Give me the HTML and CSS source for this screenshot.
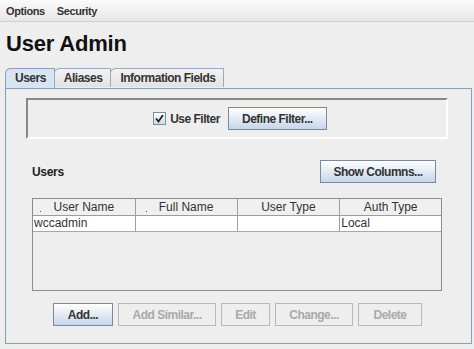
FILE: index.html
```html
<!DOCTYPE html>
<html lang="en">
<head>
    <meta charset="UTF-8">
    <title>User Admin</title>
    <link rel="stylesheet" href="styles.css">
</head>
<body>

<div class="menubar">
    <span class="menu-item">Options</span>
    <span class="menu-item">Security</span>
</div>

<h1 class="title">User Admin</h1>

<div class="tabs">
    <div class="tab active">Users</div>
    <div class="tab">Aliases</div>
    <div class="tab">Information Fields</div>
</div>

<div class="panel">
    <!-- filter -->
    <div class="filter-box">
        <label class="check">
            <span class="check-box">
                <svg width="9" height="9" viewBox="0 0 9 9"><path d="M1 4.5 L3.5 7.5 L8 1" fill="none" stroke="#222" stroke-width="1.8"/></svg>
            </span>
            Use Filter
        </label>
        <button class="btn btn-define">Define Filter...</button>
    </div>

    <div class="users-head">
        <span class="users-label">Users</span>
        <button class="btn btn-columns">Show Columns...</button>
    </div>

    <div class="table">
        <div class="row head">
            <div class="cell c1"><i class="sort-dot"></i>User Name</div>
            <div class="cell c2"><i class="sort-dot"></i>Full Name</div>
            <div class="cell c3">User Type</div>
            <div class="cell c4">Auth Type</div>
        </div>
        <div class="row data">
            <div class="cell c1">wccadmin</div>
            <div class="cell c2"></div>
            <div class="cell c3"></div>
            <div class="cell c4">Local</div>
        </div>
    </div>

    <div class="actions">
        <button class="btn btn-add">Add...</button>
        <button class="btn off btn-similar">Add Similar...</button>
        <button class="btn off btn-edit">Edit</button>
        <button class="btn off btn-change">Change...</button>
        <button class="btn off btn-delete">Delete</button>
    </div>
</div>

</body>
</html>
```

FILE: styles.css
```css
body {
    margin: 0;
    padding: 0;
    background: #eeeeee;
    font-family: 'Liberation Sans', Arial, sans-serif;
    font-size: 12px;
    color: #333;
}

.menubar {
    height: 21px;
    display: flex;
    align-items: center;
    gap: 12px;
    padding-left: 6px;
    background: linear-gradient(#fbfbfb, #e6e6e6);
    border-bottom: 1px solid #d0d0d0;
}

.menu-item {
    font-size: 11px;
    font-weight: bold;
    letter-spacing: -0.4px;
    color: #333;
}

.title {
    margin: 0;
    padding: 9px 6px 0;
    font-size: 22px;
    line-height: 26px;
    font-weight: bold;
    letter-spacing: -0.2px;
    color: #111;
}

.tabs {
    display: flex;
    margin: 11px 0 0 5px;
    position: relative;
    z-index: 1;
}

.tab {
    height: 18px;
    line-height: 18px;
    padding: 0 8px 0 9px;
    font-weight: bold;
    letter-spacing: -0.5px;
    color: #333;
    background: linear-gradient(#f2f2f2, #e2e2e2);
    border: 1px solid #9aaabd;
    border-bottom: none;
    border-top-left-radius: 6px 5px;
    margin-right: -1px;
}

.tab.active {
    height: 19px;
    background: #d8e4f1;
    border-color: #8a9fba;
}

.panel {
    width: 465px;
    margin: 0 0 0 5px;
    border: 1px solid #8da0b8;
    box-shadow: inset 0 0 0 1px #e4ecf5;
    display: flex;
    flex-direction: column;
    padding-bottom: 17px;
}

.filter-box {
    margin: 9px 23px 0 20px;
    height: 37px;
    border: 2px solid;
    border-color: #888 #fff #fff #888;
    display: flex;
    align-items: center;
    justify-content: center;
    gap: 8px;
    padding-left: 6px;
}

.check {
    display: flex;
    align-items: center;
    gap: 4px;
    font-weight: bold;
    letter-spacing: -0.5px;
    color: #333;
}

.check-box {
    width: 11px;
    height: 11px;
    border: 1px solid #7d8ea3;
    background: linear-gradient(#fff, #d0dcea);
    display: flex;
    align-items: center;
    justify-content: center;
}

.btn {
    height: 23px;
    padding: 0;
    font-family: inherit;
    font-size: 12px;
    font-weight: bold;
    letter-spacing: -0.5px;
    color: #333;
    background: linear-gradient(#ffffff, #c6d6e9);
    border: 1px solid #7a8a9c;
}

.btn.off {
    color: #a9a9a9;
    background: #eeeeee;
    border-color: #b9b9b9;
}

.btn-define { width: 99px; }
.btn-columns { width: 116px; }
.btn-add { width: 60px; }
.btn-similar { width: 98px; }
.btn-edit { width: 49px; }
.btn-change { width: 78px; }
.btn-delete { width: 64px; }

.users-head {
    display: flex;
    align-items: center;
    justify-content: space-between;
    margin: 21px 35px 0 26px;
}

.users-label {
    font-weight: bold;
    letter-spacing: -0.3px;
    color: #222;
}

.table {
    margin: 15px 29px 0 26px;
    height: 91px;
    border: 1px solid #8c8c8c;
    background: #eeeeee;
}

.row {
    display: flex;
}

.row.head {
    height: 16px;
    background: #f0f0f0;
    border-bottom: 1px solid #9c9c9c;
}

.row.data {
    height: 15px;
    background: #fff;
    border-bottom: 1px solid #a8a8a8;
}

.cell {
    position: relative;
    line-height: 16px;
    border-right: 1px solid #a0a0a0;
    white-space: nowrap;
    overflow: hidden;
}

.row.data .cell {
    line-height: 15px;
    padding-left: 1px;
}

.row.head .cell {
    text-align: center;
}

.c1 { width: 102px; }
.c2 { width: 101px; }
.c3 { width: 102px; }
.c4 { width: 101px; border-right: none; }

.sort-dot {
    position: absolute;
    left: 7px;
    top: 12px;
    width: 1px;
    height: 1px;
    background: #555;
}

.c2 .sort-dot {
    left: 10px;
}

.actions {
    display: flex;
    justify-content: center;
    gap: 5px;
    margin: 12px 0 0 -2px;
}
```
